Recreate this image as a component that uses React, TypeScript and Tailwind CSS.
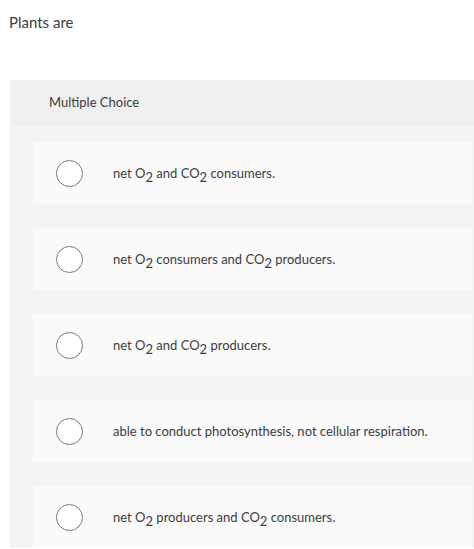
const choices: { parts: (string | { sub: string })[] }[] = [
  { parts: ["net O", { sub: "2" }, " and CO", { sub: "2" }, " consumers."] },
  { parts: ["net O", { sub: "2" }, " consumers and CO", { sub: "2" }, " producers."] },
  { parts: ["net O", { sub: "2" }, " and CO", { sub: "2" }, " producers."] },
  { parts: ["able to conduct photosynthesis, not cellular respiration."] },
  { parts: ["net O", { sub: "2" }, " producers and CO", { sub: "2" }, " consumers."] },
];

export default function App() {
  return (
    <div className="w-[474px] h-[549px] overflow-hidden bg-white font-['Lato','Open_Sans',sans-serif] text-[#3c3c3c]">
      <p className="pl-[9px] pt-[12px] text-[15px] leading-[20px]">Plants are</p>

      <div className="mt-[48px] ml-[10px] bg-[#f4f4f4]">
        <div className="h-[46px] bg-[#efefef] pl-[39px] flex items-center text-[13px]">
          Multiple Choice
        </div>

        <div className="pt-[16px] pl-[23px] pr-[2px] flex flex-col gap-[24px]">
          {choices.map((c, i) => (
            <div key={i} className="h-[62px] bg-[#fafafa] flex items-center pl-[23px]">
              <span className="w-[27px] h-[27px] rounded-full border-[1.5px] border-[#687a91] bg-white shrink-0" />
              <span className="ml-[30px] text-[13px] leading-[18px] whitespace-nowrap">
                {c.parts.map((p, j) =>
                  typeof p === "string" ? (
                    <span key={j}>{p}</span>
                  ) : (
                    <span key={j} className="relative top-[4px] text-[13px]">
                      {p.sub}
                    </span>
                  )
                )}
              </span>
            </div>
          ))}
        </div>
      </div>
    </div>
  );
}
